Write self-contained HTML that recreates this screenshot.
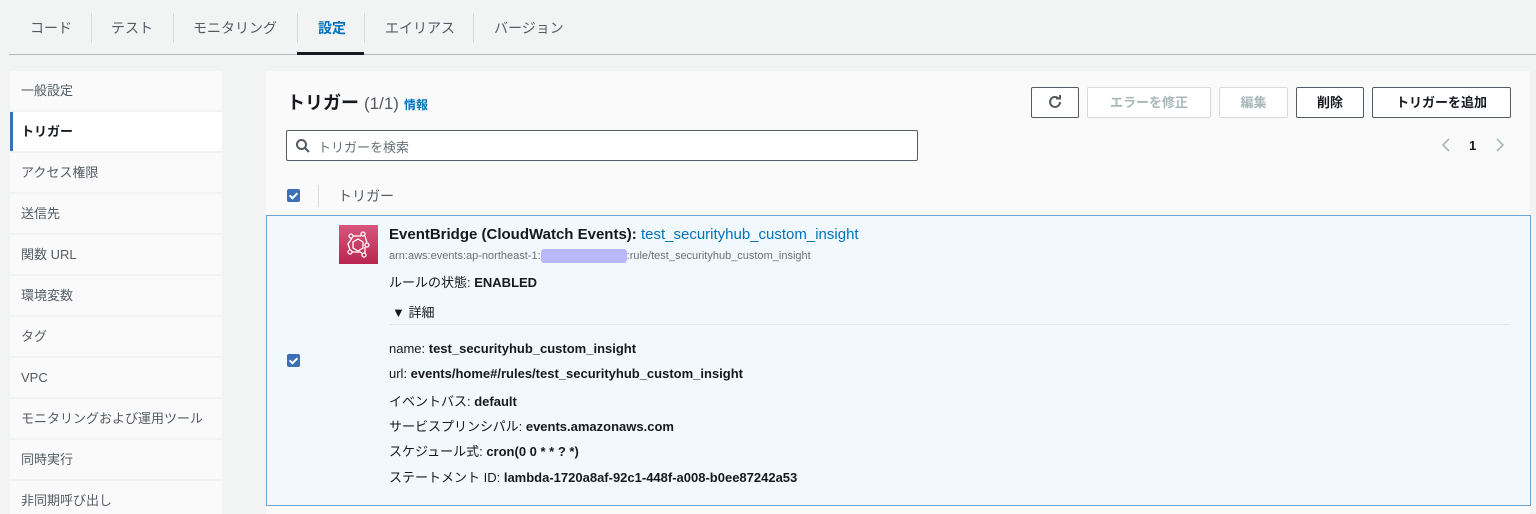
<!DOCTYPE html><html><head><meta charset="utf-8"><style>
*{box-sizing:border-box;margin:0;padding:0}
html,body{width:1536px;height:514px;overflow:hidden}
body{background:#f2f3f3;font-family:"Liberation Sans","Noto Sans CJK JP",sans-serif;color:#16191f;font-size:14px;position:relative}
.abs{position:absolute}
.tab{position:absolute;top:17px;font-size:14px;color:#545b64;height:22px;line-height:22px}
.sep{position:absolute;top:13px;width:1px;height:30px;background:#d5dbdb}
.si{position:absolute;left:10px;width:212px;height:39px;background:#fafafa;font-size:13px;color:#545b64;padding-left:11px;line-height:39px}
.btn{position:absolute;top:87px;height:31px;border:1px solid #545b64;border-radius:2px;background:#fff;font-size:13px;font-weight:bold;color:#545b64;text-align:center;line-height:29px}
.dis{border-color:#d5dbdb;color:#aab7b8}
.cb{position:absolute;width:13px;height:13px;background:#3b6fb6;border-radius:2px}
.cb:after{content:"";position:absolute;left:4px;top:1.5px;width:3px;height:6px;border:solid #fff;border-width:0 2px 2px 0;transform:rotate(45deg)}
.dl{position:absolute;left:389px;font-size:13px;color:#16191f}
.dl b{font-weight:bold}
</style></head><body>
<div class="tab" style="left:30px">コード</div><div class="sep" style="left:91px"></div>
<div class="tab" style="left:111px">テスト</div><div class="sep" style="left:173px"></div>
<div class="tab" style="left:193px">モニタリング</div><div class="sep" style="left:297px"></div>
<div class="tab" style="left:318px;color:#0073bb;font-weight:bold">設定</div><div class="sep" style="left:364px"></div>
<div class="tab" style="left:385px">エイリアス</div><div class="sep" style="left:473px"></div>
<div class="tab" style="left:494px">バージョン</div>
<div class="abs" style="left:9px;top:54px;width:1527px;height:1px;background:#b4b9b9"></div>
<div class="abs" style="left:297px;top:52px;width:67px;height:3px;background:#16191f"></div>

<div class="si" style="top:71px">一般設定</div>
<div class="si" style="top:112px;background:#fff;color:#16191f;font-weight:bold;border-left:3px solid #3b6fb6;padding-left:8px">トリガー</div>
<div class="si" style="top:153px">アクセス権限</div>
<div class="si" style="top:194px">送信先</div>
<div class="si" style="top:235px">関数 URL</div>
<div class="si" style="top:276px">環境変数</div>
<div class="si" style="top:317px">タグ</div>
<div class="si" style="top:358px">VPC</div>
<div class="si" style="top:399px">モニタリングおよび運用ツール</div>
<div class="si" style="top:440px">同時実行</div>
<div class="si" style="top:481px">非同期呼び出し</div>

<div class="abs" style="left:266px;top:71px;width:1264px;height:443px;background:#fafafa"></div>
<div class="abs" style="left:287px;top:89px;font-size:18px;font-weight:bold">トリガー <span style="font-weight:normal;color:#545b64;font-size:17px">(1/1)</span> <span style="font-size:12px;color:#0073bb;font-weight:bold">情報</span></div>
<div class="btn" style="left:1031px;width:48px"><svg width="16" height="16" viewBox="0 0 16 16" style="margin-top:6px"><path d="M13 8a5 5 0 1 1-1.6-3.7" fill="none" stroke="#545b64" stroke-width="2"/><path d="M9 4.5h4V1" fill="none" stroke="#545b64" stroke-width="2"/></svg></div>
<div class="btn dis" style="left:1087px;width:124px">エラーを修正</div>
<div class="btn dis" style="left:1219px;width:69px">編集</div>
<div class="btn" style="left:1296px;width:68px;color:#16191f">削除</div>
<div class="btn" style="left:1372px;width:139px;color:#16191f">トリガーを追加</div>
<div class="abs" style="left:286px;top:130px;width:632px;height:31px;border:1px solid #545b64;border-radius:2px;background:#fff"></div>
<svg class="abs" style="left:295px;top:138px" width="16" height="16"><circle cx="6.5" cy="6.5" r="4.5" fill="none" stroke="#545b64" stroke-width="2"/><path d="M10 10l4 4" stroke="#545b64" stroke-width="2"/></svg>
<div class="abs" style="left:318px;top:137px;font-size:13px;color:#687078">トリガーを検索</div>
<svg class="abs" style="left:1440px;top:137px" width="12" height="16"><path d="M9 2L3 8l6 6" fill="none" stroke="#aab7b8" stroke-width="1.6"/></svg>
<div class="abs" style="left:1469px;top:138px;font-size:13px;font-weight:bold">1</div>
<svg class="abs" style="left:1494px;top:137px" width="12" height="16"><path d="M3 2l6 6-6 6" fill="none" stroke="#aab7b8" stroke-width="1.6"/></svg>
<div class="cb" style="left:287px;top:189px"></div>
<div class="abs" style="left:318px;top:185px;width:1px;height:22px;background:#d5dbdb"></div>
<div class="abs" style="left:338px;top:186px;font-size:14px;color:#545b64">トリガー</div>

<div class="abs" style="left:266px;top:215px;width:1265px;height:291px;background:#f1f8fe;border:1px solid #6ea3cd"></div>
<div class="abs" style="left:339px;top:225px;width:39px;height:39px;background:linear-gradient(#d9567c,#b8264f)"><svg width="39" height="39" fill="none" stroke="#fff" stroke-width="1.3"><circle cx="12" cy="11" r="2"/><circle cx="24" cy="9" r="2"/><circle cx="28" cy="20" r="2"/><circle cx="11" cy="27" r="2"/><circle cx="25" cy="30" r="2"/><path d="M19 14l5 3v6l-5 3-5-3v-6z"/><path d="M14 11h8M26 11l2 7M13 13l-4 6 2 6M13 27h8l2 1M26 22v6"/></svg></div>
<div class="abs" style="left:389px;top:226px;font-size:15px"><b style="color:#16191f">EventBridge (CloudWatch Events):</b> <span style="color:#0073bb">test_securityhub_custom_insight</span></div>
<div class="abs" style="left:389px;top:249px;font-size:11px;color:#687078">arn:aws:events:ap-northeast-1:<span style="display:inline-block;width:86px;height:14px;background:#b8b8fa;border-radius:3px;vertical-align:middle"></span>:rule/test_securityhub_custom_insight</div>
<div class="dl" style="top:272px">ルールの状態: <b>ENABLED</b></div>
<div class="dl" style="top:302px;left:392px">▼ 詳細</div>
<div class="abs" style="left:389px;top:324px;width:1121px;height:1px;background:#e3e7ea"></div>
<div class="cb" style="left:287px;top:354px"></div>
<div class="dl" style="top:341px">name: <b>test_securityhub_custom_insight</b></div>
<div class="dl" style="top:366px">url: <b>events/home#/rules/test_securityhub_custom_insight</b></div>
<div class="dl" style="top:391px">イベントバス: <b>default</b></div>
<div class="dl" style="top:416px">サービスプリンシパル: <b>events.amazonaws.com</b></div>
<div class="dl" style="top:441px">スケジュール式: <b>cron(0 0 * * ? *)</b></div>
<div class="dl" style="top:467px">ステートメント ID: <b>lambda-1720a8af-92c1-448f-a008-b0ee87242a53</b></div>
</body></html>
